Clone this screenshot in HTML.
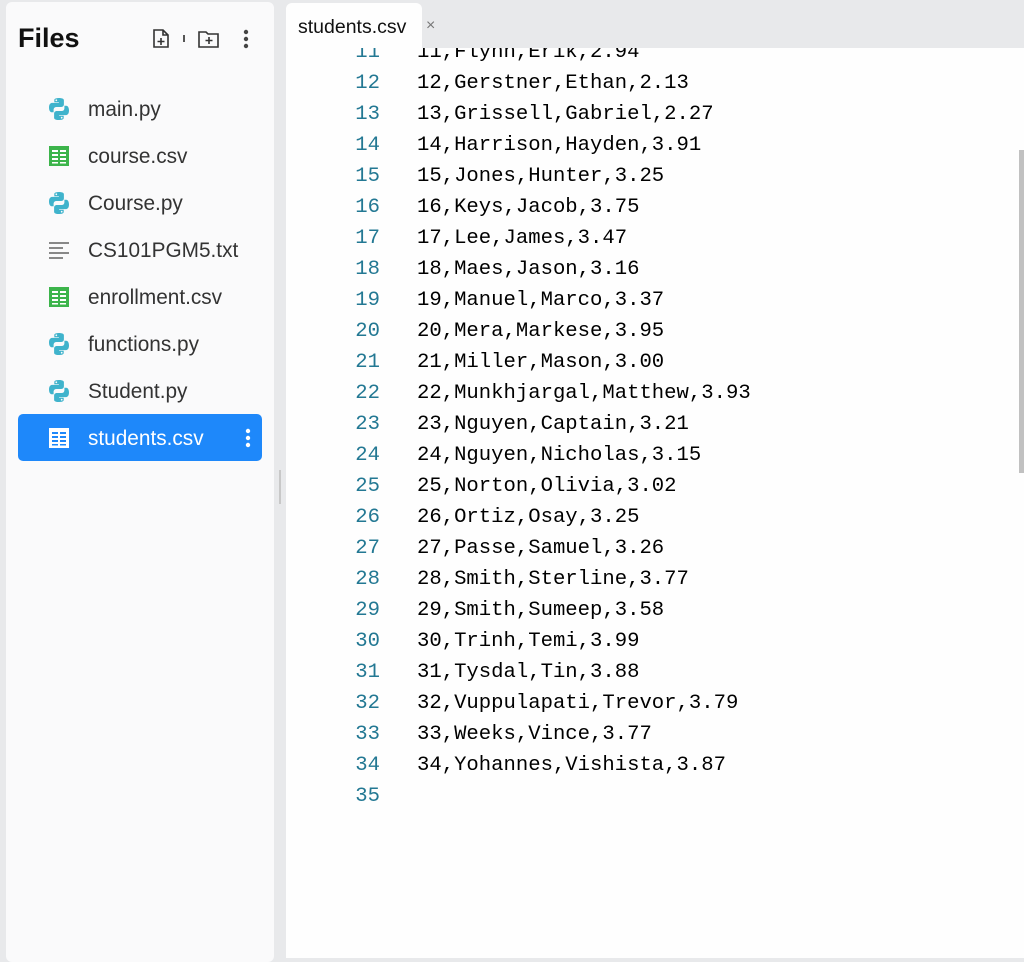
<!DOCTYPE html>
<html><head><meta charset="utf-8"><style>
*{margin:0;padding:0;box-sizing:border-box}
body{width:1024px;height:958px;background:#e8e9eb;position:relative;overflow:hidden;font-family:"Liberation Sans",sans-serif}
#side{position:absolute;left:6px;top:2px;width:268px;height:960px;background:#fafafb;border-radius:6px}
#title{position:absolute;left:12px;top:21px;font-size:27px;font-weight:bold;color:#111}
.item{position:absolute;left:12px;width:244px;height:47px;border-radius:5px}
.item svg{position:absolute;left:29px;top:12px}
.item span{position:absolute;left:70px;top:13px;font-size:20.8px;color:#333}
.sel{background:#1e88fa}
.sel span{color:#fff}
#editor{position:absolute;left:286px;top:48px;width:738px;height:910px;background:#fefefe;overflow:hidden}
#tab{position:absolute;left:286px;top:3px;width:136px;height:46px;background:#fefefe;border-radius:6px 6px 0 0}
#tab span{position:absolute;left:12px;top:13px;font-size:19.5px;color:#111}
#tab i{position:absolute;left:140px;top:14px;font-style:normal;color:#777;font-size:16px}
.ln{position:absolute;left:0;width:94px;text-align:right;font-family:"Liberation Mono",monospace;font-size:20.6px;color:#237893}
.cd{position:absolute;left:131px;font-family:"Liberation Mono",monospace;font-size:20.6px;color:#000;white-space:pre}
#sb{position:absolute;left:1019px;top:150px;width:5px;height:323px;background:#c1c1c1}
#grip{position:absolute;left:279px;top:470px;width:2px;height:34px;background:#c8c8c8}
</style></head><body>
<div id="side">
<div id="title">Files</div>
<svg style="position:absolute;left:146px;top:27px" width="18" height="20" viewBox="0 0 18 20" fill="none" stroke="#333" stroke-width="1.6"><path d="M2 1h9l5 5v12H2z M11 1v5h5 M9 9v7 M5.5 12.5h7"/></svg>
<div style="position:absolute;left:177px;top:33px;width:1.5px;height:7px;background:#555"></div>
<svg style="position:absolute;left:192px;top:28px" width="22" height="18" viewBox="0 0 22 18" fill="none" stroke="#333" stroke-width="1.6"><path d="M1 2h7l2 2h10v13H1z M11 7v7 M7.5 10.5h7"/></svg>
<svg style="position:absolute;left:237px;top:27px" width="6" height="20"><circle cx="3" cy="3" r="2.2" fill="#444"/><circle cx="3" cy="10" r="2.2" fill="#444"/><circle cx="3" cy="17" r="2.2" fill="#444"/></svg>
</div>
<div id="grip"></div>
<div id="files"></div>
<div id="tab"><span>students.csv</span><i>×</i></div>
<div id="editor"><div id="code"></div></div>
<div id="sb"></div>
<script>
var py='<svg width="24" height="24" viewBox="0 0 24 24"><path fill="#3fb3cc" d="M11.8 1C7 1 7.3 3 7.3 3v2.2h4.6v.7H5.3S2 5.5 2 10.5s2.9 4.8 2.9 4.8h1.7v-2.4s-.1-2.9 2.8-2.9h4.8s2.7 0 2.7-2.6V3.3S17.4 1 11.8 1zM9.3 2.4a.9.9 0 110 1.8.9.9 0 010-1.8z"/><path fill="#3fb3cc" d="M12.2 23c4.8 0 4.5-2 4.5-2v-2.2h-4.6v-.7h6.6S22 18.5 22 13.5s-2.9-4.8-2.9-4.8h-1.7v2.4s.1 2.9-2.8 2.9H9.8s-2.7 0-2.7 2.6v4.1S6.6 23 12.2 23zm2.5-1.4a.9.9 0 110-1.8.9.9 0 010 1.8z"/></svg>';
function grid(bg,fg){return '<svg width="24" height="24" viewBox="0 0 24 24"><rect x="2" y="2" width="20" height="20" fill="'+bg+'"/><g fill="'+fg+'"><rect x="5" y="6" width="6" height="2"/><rect x="13" y="6" width="6" height="2"/><rect x="5" y="10" width="6" height="2"/><rect x="13" y="10" width="6" height="2"/><rect x="5" y="14" width="6" height="2"/><rect x="13" y="14" width="6" height="2"/><rect x="5" y="18" width="6" height="1.5"/><rect x="13" y="18" width="6" height="1.5"/></g></svg>';}
var txt='<svg width="24" height="24" viewBox="0 0 24 24" fill="#888"><rect x="2" y="4" width="20" height="2"/><rect x="2" y="9" width="14" height="2"/><rect x="2" y="14" width="20" height="2"/><rect x="2" y="19" width="14" height="2"/></svg>';
var f=[[py,'main.py'],[grid('#3cb44b','#fff'),'course.csv'],[py,'Course.py'],[txt,'CS101PGM5.txt'],[grid('#3cb44b','#fff'),'enrollment.csv'],[py,'functions.py'],[py,'Student.py'],[grid('#fff','#1e88fa'),'students.csv']];
var h='';f.forEach(function(x,i){var s=i==7;h+='<div class="item'+(s?' sel':'')+'" style="top:'+(85+47*i)+'px;left:18px">'+x[0]+'<span>'+x[1]+'</span>'+(s?'<svg style="left:227px;top:14px" width="6" height="20"><circle cx="3" cy="3" r="2.2" fill="#fff"/><circle cx="3" cy="10" r="2.2" fill="#fff"/><circle cx="3" cy="17" r="2.2" fill="#fff"/></svg>':'')+'</div>';});
document.getElementById('files').innerHTML=h;
var L=["11,Flynn,Erik,2.94","12,Gerstner,Ethan,2.13","13,Grissell,Gabriel,2.27","14,Harrison,Hayden,3.91","15,Jones,Hunter,3.25","16,Keys,Jacob,3.75","17,Lee,James,3.47","18,Maes,Jason,3.16","19,Manuel,Marco,3.37","20,Mera,Markese,3.95","21,Miller,Mason,3.00","22,Munkhjargal,Matthew,3.93","23,Nguyen,Captain,3.21","24,Nguyen,Nicholas,3.15","25,Norton,Olivia,3.02","26,Ortiz,Osay,3.25","27,Passe,Samuel,3.26","28,Smith,Sterline,3.77","29,Smith,Sumeep,3.58","30,Trinh,Temi,3.99","31,Tysdal,Tin,3.88","32,Vuppulapati,Trevor,3.79","33,Weeks,Vince,3.77","34,Yohannes,Vishista,3.87",""];
var c='';L.forEach(function(t,i){var y=-7+31*i;c+='<div class="ln" style="top:'+y+'px">'+(11+i)+'</div><div class="cd" style="top:'+y+'px">'+t+'</div>';});
document.getElementById('code').innerHTML=c;
</script>
</body></html>
